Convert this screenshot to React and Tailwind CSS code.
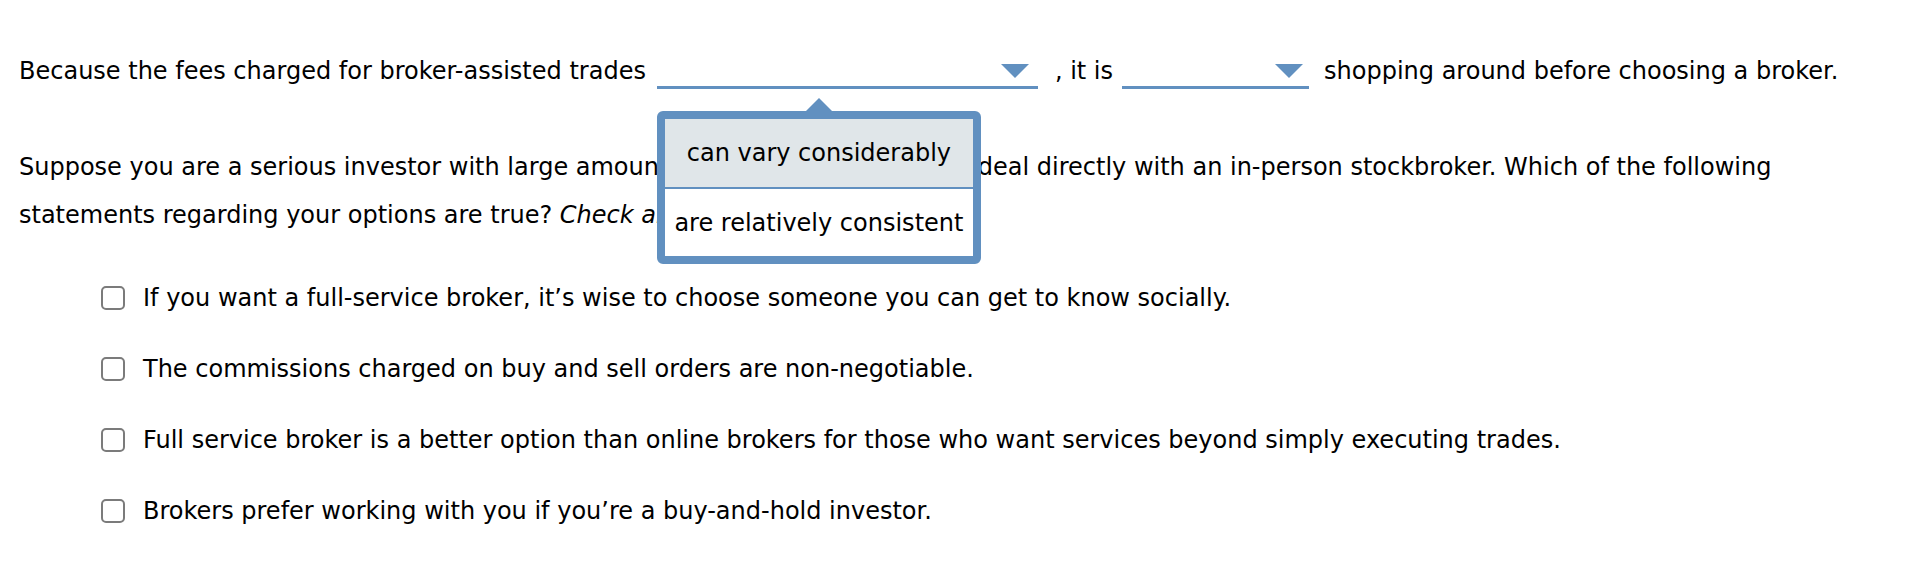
import React from "react";

const BLUE = "#6190c0";

function Dropdown({ width, open, caretRight }) {
  return (
    <span className={`relative inline-block h-[42px] border-b-[3px] border-[#6190c0] shrink-0 ${width}`}>
      <svg width="28" height="15" viewBox="0 0 28 15" className={`absolute top-[17px] ${caretRight}`}>
        <polygon points="0,0 28,0 14,14" fill={BLUE} />
      </svg>
      {open && (
        <div className="absolute left-0 top-[64px] w-[324px] h-[153px] z-10">
          <svg width="28" height="15" viewBox="0 0 28 15" className="absolute left-[148px] -top-[14px]">
            <polygon points="0,15 14,1 28,15" fill={BLUE} />
          </svg>
          <div className="w-full h-full bg-white border-[8px] border-[#6190c0] rounded-[6px] flex flex-col">
            <div className="h-[68px] bg-[#e0e6e9] flex items-center justify-center leading-[28px]">
              can vary considerably
            </div>
            <div className="h-[2px] bg-[#6190c0]" />
            <div className="flex-1 flex items-center justify-center leading-[28px]">
              are relatively consistent
            </div>
          </div>
        </div>
      )}
    </span>
  );
}

function Check({ children }) {
  return (
    <div className="flex items-center h-[71px]">
      <span className="w-[24px] h-[24px] border-2 border-[#7b7b7b] rounded-[5px] bg-white shrink-0" />
      <span className="ml-[18px] leading-[28px]">{children}</span>
    </div>
  );
}

export default function App() {
  return (
    <div
      className="w-[1908px] h-[574px] bg-white text-black text-[24px] pl-[19px] pt-[47px] overflow-hidden"
      style={{ fontFamily: '"DejaVu Sans", Verdana, sans-serif' }}
    >
      <div className="flex items-start h-[48px] leading-[48px] whitespace-nowrap">
        <span>Because the fees charged for broker-assisted trades</span>
        <span className="ml-[11px]">
          <Dropdown width="w-[381px]" open caretRight="right-[9px]" />
        </span>
        <span className="ml-[17px]">, it is</span>
        <span className="ml-[9px]">
          <Dropdown width="w-[187px]" caretRight="right-[6px]" />
        </span>
        <span className="ml-[15px]">shopping around before choosing a broker.</span>
      </div>

      <p className="mt-[48px] leading-[48px] whitespace-nowrap">
        Suppose you are a serious investor with large amounts of money and intend to deal directly with an in-person stockbroker. Which of the following
        <br />
        statements regarding your options are true? <i>Check all that apply.</i>
      </p>

      <div className="mt-[23px] pl-[82px]">
        <Check>If you want a full-service broker, it’s wise to choose someone you can get to know socially.</Check>
        <Check>The commissions charged on buy and sell orders are non-negotiable.</Check>
        <Check>Full service broker is a better option than online brokers for those who want services beyond simply executing trades.</Check>
        <Check>Brokers prefer working with you if you’re a buy-and-hold investor.</Check>
      </div>
    </div>
  );
}
